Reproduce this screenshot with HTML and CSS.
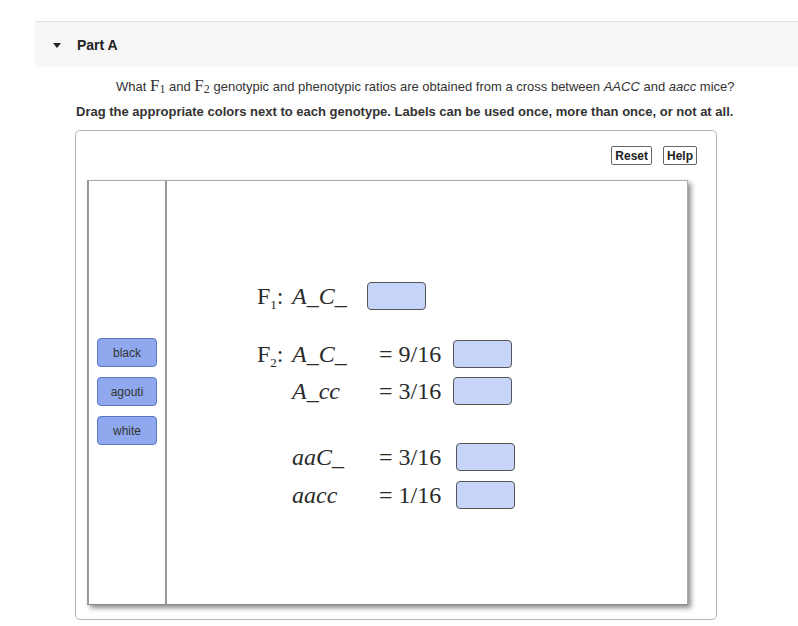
FILE: index.html
```
<!DOCTYPE html>
<html>
<head>
<meta charset="utf-8">
<link rel="stylesheet" href="styles.css">
</head>
<body>
<div class="part">
  <div class="part-head"><span class="caret"></span><span class="part-title">Part A</span></div>
  <p class="question">What <span class="mf">F<sub>1</sub></span> and <span class="mf">F<sub>2</sub></span> genotypic and phenotypic ratios are obtained from a cross between <i>AACC</i> and <i>aacc</i> mice?</p>
  <p class="instr">Drag the appropriate colors next to each genotype. Labels can be used once, more than once, or not at all.</p>
  <div class="box">
    <div class="toolbar"><button class="tbtn">Reset</button><button class="tbtn">Help</button></div>
    <div class="canvas">
      <div class="bank">
        <div class="label">black</div>
        <div class="label">agouti</div>
        <div class="label">white</div>
      </div>
      <div class="pane">
        <div class="eq">
          <div class="row r1"><span class="lab">F<sub>1</sub>:</span><span class="geno short">A_C_</span><span class="drop"></span></div>
          <div class="row r2"><span class="lab">F<sub>2</sub>:</span><span class="geno">A_C_</span><span class="ratio">= 9/16</span><span class="drop"></span></div>
          <div class="row r3"><span class="lab"></span><span class="geno">A_cc</span><span class="ratio">= 3/16</span><span class="drop"></span></div>
          <div class="row r4"><span class="lab"></span><span class="geno">aaC_</span><span class="ratio wide">= 3/16</span><span class="drop"></span></div>
          <div class="row r5"><span class="lab"></span><span class="geno">aacc</span><span class="ratio wide">= 1/16</span><span class="drop"></span></div>
        </div>
      </div>
    </div>
  </div>
</div>
</body>
</html>
```
FILE: styles.css
```
html, body { margin: 0; padding: 0; background: #fff; }
body { font-family: "Liberation Sans", Arial, sans-serif; color: #333; }
.part { margin: 21px 0 0 35px; }
.part-head {
  border-top: 1px solid #e2e2e2;
  background: #f7f7f7;
  height: 45px;
  display: flex;
  align-items: center;
  padding-left: 18px;
}
.caret {
  width: 0; height: 0;
  border-left: 4px solid transparent;
  border-right: 4px solid transparent;
  border-top: 5px solid #222;
  margin-right: 16px;
  margin-top: 1px;
}
.part-title { font-weight: bold; font-size: 14px; color: #222; }
.question { margin: 10px 0 0 81px; font-size: 13px; line-height: 18px; height: 18px; }
.mf { font-family: "Liberation Serif", "Times New Roman", serif; font-size: 17px; }
.mf sub { font-size: 12px; vertical-align: -2px; line-height: 0; }
.instr { margin: 9px 0 0 41px; font-size: 13px; font-weight: bold; line-height: 16px; }
.box {
  margin: 10px 0 0 40px;
  width: 640px;
  height: 488px;
  border: 1px solid #b5b5b5;
  border-radius: 5px;
}
.toolbar {
  display: flex;
  justify-content: flex-end;
  gap: 11px;
  padding: 15px 19px 0 0;
  height: 34px;
}
.tbtn {
  font-family: "Liberation Sans", Arial, sans-serif;
  font-weight: bold;
  font-size: 12px;
  color: #222;
  background: #fff;
  border: 1px solid #666;
  border-radius: 2px;
  height: 19px;
  padding: 0 3px;
  line-height: 16px;
}
.canvas {
  margin-left: 11px;
  width: 598px;
  height: 423px;
  border: 1px solid #aaa;
  border-left: 2px solid #999;
  border-bottom-color: #888;
  display: flex;
  box-shadow: 3px 3px 5px rgba(0,0,0,0.45);
  background: #fff;
}
.bank {
  width: 76px;
  border-right: 2px solid #999;
  display: flex;
  flex-direction: column;
  align-items: center;
  gap: 10px;
  padding-top: 157px;
}
.label {
  width: 58px;
  height: 27px;
  box-sizing: content-box;
  background: #8fa8ee;
  border: 1px solid #5a77c4;
  border-radius: 4px;
  font-size: 12px;
  color: #333;
  display: flex;
  align-items: center;
  justify-content: center;
}
.pane { flex: 1; padding: 101px 0 0 90px; }
.eq { font-family: "Liberation Serif", "Times New Roman", serif; font-size: 24px; color: #2a2a2a; }
.row { display: flex; align-items: center; height: 28px; }
.r2 { margin-top: 30px; }
.r3 { margin-top: 9px; }
.r4 { margin-top: 38px; }
.r5 { margin-top: 10px; }
.lab { width: 35px; }
.lab sub { font-size: 13px; vertical-align: -5px; line-height: 0; }
.geno { width: 87px; font-style: italic; }
.geno.short { width: auto; margin-right: 20px; }
.ratio { width: 74px; }
.ratio.wide { width: 77px; }
.drop {
  width: 57px;
  height: 26px;
  background: #c6d4f7;
  border: 1px solid #555;
  border-radius: 4px;
}
```
